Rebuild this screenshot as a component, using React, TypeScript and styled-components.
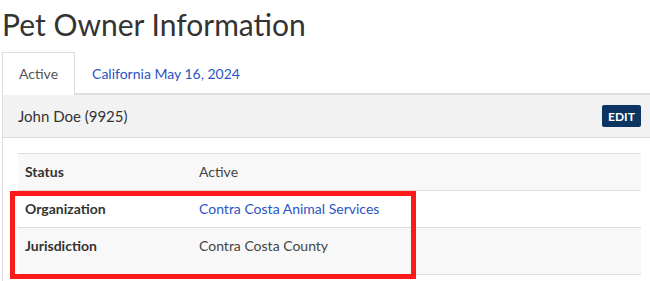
import React from "react";
import styled, { createGlobalStyle } from "styled-components";

const GlobalStyle = createGlobalStyle`
  html, body {
    margin: 0;
    padding: 0;
    background: #ffffff;
    overflow: hidden;
  }

  * {
    box-sizing: border-box;
  }

  body {
    font-family: Lato, "Liberation Sans", sans-serif;
    color: #333333;
  }
`;

type Row = { label: string; value: string; link?: boolean };

const rows: Row[] = [
  { label: "Status", value: "Active" },
  { label: "Organization", value: "Contra Costa Animal Services", link: true },
  { label: "Jurisdiction", value: "Contra Costa County" },
];

export default function App() {
  return (
    <>
      <GlobalStyle />
      <Page>
        <Title>Pet Owner Information</Title>
        <TabList>
          <Tab $active>Active</Tab>
          <Tab>California May 16, 2024</Tab>
        </TabList>
        <Panel>
          <PanelHeader>
            <OwnerName>John Doe (9925)</OwnerName>
            <EditButton>EDIT</EditButton>
          </PanelHeader>
          <PanelBody>
            <InfoTable>
              <tbody>
                {rows.map((row, i) => (
                  <TableRow key={row.label} $striped={i % 2 === 0} $last={i === rows.length - 1}>
                    <LabelCell>{row.label}</LabelCell>
                    <ValueCell>
                      {row.link ? <ValueLink href="#">{row.value}</ValueLink> : row.value}
                    </ValueCell>
                  </TableRow>
                ))}
              </tbody>
            </InfoTable>
          </PanelBody>
          <Highlight />
        </Panel>
      </Page>
    </>
  );
}

const Page = styled.div`
  width: 657px;
  padding: 0 0 0 2px;
`;

const Title = styled.h1`
  margin: 0;
  padding: 4px 0 0 0;
  height: 52px;
  font-size: 30px;
  font-weight: 400;
  line-height: 40px;
  color: #333333;
`;

const TabList = styled.div`
  display: flex;
  align-items: flex-end;
  height: 41px;
`;

const Tab = styled.a<{ $active?: boolean }>`
  display: flex;
  align-items: center;
  padding: 0 16px;
  font-size: 14px;
  text-decoration: none;
  color: ${(p) => (p.$active ? "#555555" : "#2a55c4")};
  background: ${(p) => (p.$active ? "#ffffff" : "transparent")};
  border: 1px solid ${(p) => (p.$active ? "#dddddd" : "transparent")};
  border-bottom: none;
  margin-bottom: ${(p) => (p.$active ? "-2px" : "0")};
  height: ${(p) => (p.$active ? "43px" : "41px")};
  padding-bottom: ${(p) => (p.$active ? "2px" : "0")};
  position: relative;
  z-index: 1;
  cursor: pointer;
`;

const Panel = styled.div`
  position: relative;
  border-top: 2px solid #dddddd;
  border-left: 1px solid #dddddd;
  border-right: 1px solid #dddddd;
  background: #ffffff;
  height: 200px;
`;

const PanelHeader = styled.div`
  display: flex;
  justify-content: space-between;
  align-items: center;
  height: 43px;
  padding: 0 15px;
  background: #f2f2f2;
  border-bottom: 1px solid #dddddd;
`;

const OwnerName = styled.span`
  font-size: 15px;
  color: #333333;
`;

const EditButton = styled.button`
  width: 39px;
  height: 22px;
  padding: 0;
  border: none;
  border-radius: 2px;
  background: #0d3562;
  color: #ffffff;
  font-family: Lato, "Liberation Sans", sans-serif;
  font-size: 12px;
  font-weight: 700;
  cursor: pointer;
`;

const PanelBody = styled.div`
  padding: 15px 15px 0 15px;
`;

const InfoTable = styled.table`
  width: 100%;
  border-collapse: collapse;
  border-top: 1px solid #dddddd;
`;

const TableRow = styled.tr<{ $striped: boolean; $last: boolean }>`
  background: ${(p) => (p.$striped ? "#f8f8f8" : "#ffffff")};
  border-bottom: 1px solid #dddddd;

  td {
    padding: 8px 8px ${(p) => (p.$last ? "18px" : "8px")} 7px;
    height: ${(p) => (p.$last ? "46px" : "36px")};
  }
`;

const LabelCell = styled.td`
  width: 174px;
  font-size: 14px;
  font-weight: 700;
  line-height: 20px;
  color: #333333;
  vertical-align: top;
`;

const ValueCell = styled.td`
  font-size: 14px;
  line-height: 20px;
  color: #444444;
  vertical-align: top;
`;

const ValueLink = styled.a`
  color: #2a55c4;
  text-decoration: none;
`;

const Highlight = styled.div`
  position: absolute;
  left: 7px;
  top: 96px;
  width: 406px;
  height: 88px;
  border: 5px solid #ff1a1a;
  pointer-events: none;
`;
